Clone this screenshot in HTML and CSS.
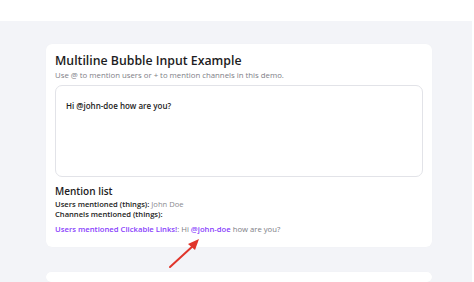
FILE: index.html
```html
<!DOCTYPE html>
<html>
<head>
    <title>Multiline Bubble Input Example</title>
    <link rel="stylesheet" href="styles.css">
</head>
<body>
    <div class="page">
        <div class="card">
            <h1 class="title">Multiline Bubble Input Example</h1>
            <p class="subtitle">Use @ to mention users or + to mention channels in this demo.</p>

            <div class="bubble-input">
                <span class="bubble-text">Hi @john-doe how are you?</span>
            </div>

            <h2 class="section-title">Mention list</h2>
            <p class="mention-row"><b>Users mentioned (things):</b> <span class="muted">John Doe</span></p>
            <p class="mention-row"><b>Channels mentioned (things):</b></p>
            <p class="links-row"><b>Users mentioned Clickable Links!</b>: Hi <a class="mention" href="#">@john-doe</a> how are you?</p>
        </div>

        <div class="card card-next"></div>

        <!-- pointer annotation -->
        <svg class="arrow" width="40" height="40" viewBox="0 0 40 40">
            <line x1="3" y1="31" x2="27" y2="9" stroke="#e0352b" stroke-width="2" stroke-linecap="round"/>
            <polygon points="32,3 21,8 28,14" fill="#e0352b"/>
        </svg>
    </div>
</body>
</html>
```
FILE: styles.css
```css
body {
    margin: 0;
    padding: 21px 2px 0 0;
    background-color: #fff;
    font-family: "Open Sans", Arial, sans-serif;
    overflow: hidden;
}

.page {
    position: relative;
    box-sizing: border-box;
    background-color: #f3f4f8;
    height: 261px;
    padding: 23px 40px 0 46px;
    overflow: hidden;
}

.card {
    background-color: #fff;
    border-radius: 6px;
    padding: 8px 9px 13px 9px;
    box-shadow: 0 0 1px rgba(0, 0, 0, 0.04);
}

.title {
    margin: 0;
    font-size: 12.3px;
    font-weight: 600;
    color: #1c1c22;
    line-height: 18px;
}

.subtitle {
    margin: 0 0 4px;
    font-size: 7.8px;
    color: #7e7e86;
    line-height: 11px;
}

.bubble-input {
    height: 78px;
    border: 1px solid #e2e3e8;
    border-radius: 7px;
    padding: 6px 10px;
}

.bubble-text {
    font-size: 8px;
    font-weight: 600;
    color: #1c1c22;
}

.section-title {
    margin: 8px 0 2px;
    font-size: 10px;
    font-weight: 600;
    color: #1c1c22;
    line-height: 13px;
}

.mention-row {
    margin: 0;
    font-size: 7.6px;
    line-height: 9.5px;
    color: #1c1c22;
}

.mention-row b {
    font-weight: 600;
}

.muted {
    color: #8a8a90;
}

.links-row {
    margin: 5px 0 0;
    font-size: 7.7px;
    line-height: 10px;
    color: #7e7e86;
}

.links-row b {
    color: #8a3ffc;
    font-weight: 600;
}

.mention {
    color: #8a3ffc;
    text-decoration: none;
    font-weight: 600;
}

.card-next {
    margin-top: 25px;
    height: 10px;
    padding: 0;
}

.arrow {
    position: absolute;
    left: 167px;
    top: 215px;
}
```
